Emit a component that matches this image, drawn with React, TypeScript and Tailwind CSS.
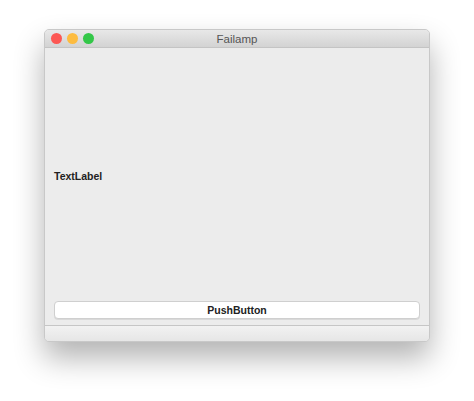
export default function App() {
  return (
    <div className="h-[401px] w-[474px] bg-white pl-[44px] pt-[29px]" style={{ fontFamily: '"Liberation Sans", Arial, sans-serif' }}>
      <div className="flex h-[313px] w-[386px] flex-col overflow-hidden rounded-[5px] border border-[#c8c8c8] bg-[#ececec] shadow-[0_16px_30px_rgba(0,0,0,0.3)]">
        <div className="relative flex h-[18px] shrink-0 items-center border-b border-[#c4c4c4] bg-gradient-to-b from-[#e8e8e8] to-[#d3d3d3] px-[6px]">
          <div className="flex gap-[5px]">
            <span className="h-[11px] w-[11px] rounded-full bg-[#fc5753]" />
            <span className="h-[11px] w-[11px] rounded-full bg-[#fdbc40]" />
            <span className="h-[11px] w-[11px] rounded-full bg-[#33c748]" />
          </div>
          <span className="absolute inset-x-0 text-center text-[11.5px] leading-[18px] text-[#555]">Failamp</span>
        </div>
        <div className="flex flex-1 flex-col px-[9px]">
          <div className="flex flex-1 items-center">
            <span className="pt-[5px] text-[10.5px] font-bold text-[#222]">TextLabel</span>
          </div>
          <button className="mb-[6px] h-[18px] w-full rounded-[4px] border border-[#cfcfcf] bg-white text-[10.5px] font-bold leading-[16px] text-[#222] shadow-[0_1px_0_rgba(0,0,0,0.08)]">
            PushButton
          </button>
        </div>
        <div className="h-[16px] shrink-0 border-t border-[#c6c6c6] bg-gradient-to-b from-[#f2f2f2] to-[#e6e6e6]" />
      </div>
    </div>
  )
}
